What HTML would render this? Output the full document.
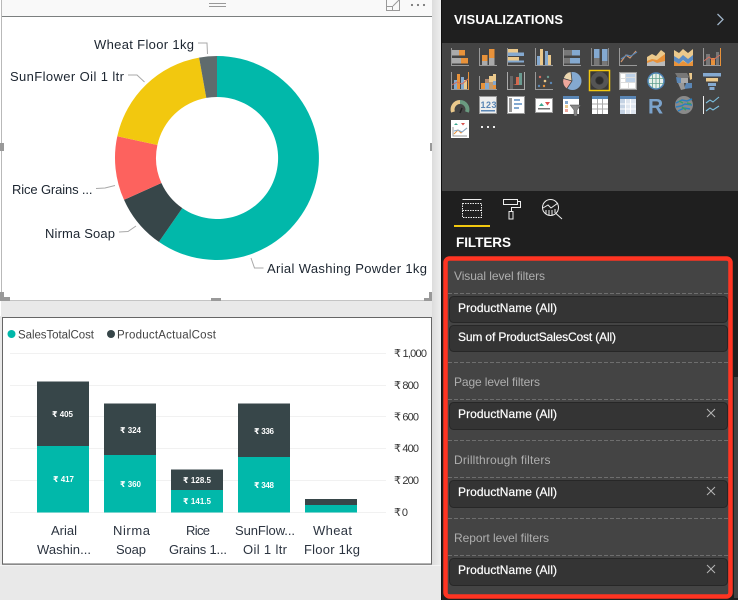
<!DOCTYPE html>
<html><head><meta charset="utf-8"><style>
html,body{margin:0;padding:0;background:#e9e9e9;width:738px;height:600px;overflow:hidden}
svg{display:block}
text{font-family:"Liberation Sans","DejaVu Sans",sans-serif}
.l{font-size:13px;fill:#1c2530}
.x{font-size:13px;fill:#2c3440}
.a{font-size:11px;fill:#333}
.d{font-size:8px;fill:#fff;font-weight:bold}
.h{font-size:12px;fill:#aeaeae}
.p{font-size:12px;fill:#fff;stroke:#fff;stroke-width:.2}
.g{stroke:#f1f1f1;stroke-width:1}
</style></head><body>
<svg width="738" height="600" viewBox="0 0 738 600" xmlns="http://www.w3.org/2000/svg">
<defs><linearGradient id="s" x1="0" x2="1" y1="0" y2="0"><stop offset="0" stop-color="#dcdcdc"/><stop offset="1" stop-color="#eeeeee"/></linearGradient></defs>
<rect width="738" height="600" fill="#e9e9e9"/>
<rect x="432" y="0" width="9" height="565" fill="url(#s)"/>
<rect x="0" y="565" width="441" height="1" fill="#f4f4f4"/>
<!-- top visual -->
<rect x="2" y="0" width="430" height="16" fill="#f9f9f9"/>
<rect x="2" y="16" width="430" height="284" fill="#fff"/>
<rect x="0" y="0" width="1" height="316" fill="#fff"/>
<rect x="2" y="16" width="430" height="1" fill="#7b7f7f"/>
<rect x="1" y="0" width="1" height="300" fill="#b9b9b9"/>
<rect x="2" y="300" width="430" height="1" fill="#c4c4c4"/>
<rect x="0" y="143" width="4" height="8" fill="#999"/>
<path d="M0 292h4v5h6v4H0z" fill="#999"/>
<rect x="211" y="298" width="10" height="3" fill="#999"/>
<rect x="430" y="143" width="2" height="8" fill="#999"/>
<path d="M432 292v9h-8v-3h5v-6z" fill="#999"/>
<path d="M209 3.500h17M209 6.500h17" stroke="#999" stroke-width="1" fill="none"/>
<path d="M386.500 0v10.500h13V0M386.500 6.500h6v4M393 6l6-6" stroke="#999" stroke-width="1" fill="none"/>
<circle cx="412" cy="5" r="1.100" fill="#777"/><circle cx="418" cy="5" r="1.100" fill="#777"/><circle cx="424" cy="5" r="1.100" fill="#777"/>
<!-- donut -->
<path d="M217 56A102 102 0 1 1 158.900 241.900L182.300 208.100A61 61 0 1 0 217 97Z" fill="#01B8AA"/>
<path d="M158.900 241.900A102 102 0 0 1 124 199.800L161.400 183A61 61 0 0 0 182.300 208.100Z" fill="#374649"/>
<path d="M124 199.800A102 102 0 0 1 117.300 136.300L157.400 145A61 61 0 0 0 161.400 183Z" fill="#FD625E"/>
<path d="M117.300 136.300A102 102 0 0 1 199.100 57.600L206.300 97.900A61 61 0 0 0 157.400 145Z" fill="#F2C80F"/>
<path d="M199.100 57.600A102 102 0 0 1 217 56V97A61 61 0 0 0 206.300 97.900Z" fill="#5F6B6D"/>
<g fill="none" stroke="#a8a8a8" stroke-width="1">
<path d="M198 43h9l.5 11"/><path d="M128 75h9l7.500 7"/><path d="M96 188.500l9-.5 10-2.500"/><path d="M119 232l9-.5 8-5.500"/><path d="M251 258l3.500 10h9"/>
</g>
<text class="l" x="94" y="49" textLength="100">Wheat Floor 1kg</text>
<text class="l" x="10" y="81" textLength="114">SunFlower Oil 1 ltr</text>
<text class="l" x="12" y="194" textLength="80.500">Rice Grains ...</text>
<text class="l" x="45" y="238" textLength="70">Nirma Soap</text>
<text class="l" x="267" y="273" textLength="160">Arial Washing Powder 1kg</text>
<!-- bottom visual -->
<rect x="2.500" y="317.500" width="429" height="246.500" fill="#fff" stroke="#666" stroke-width="1"/>
<rect x="2" y="564" width="430" height="1" fill="#8a8a8a"/>
<circle cx="11.500" cy="334" r="4" fill="#01B8AA"/>
<text x="18" y="338.500" font-size="11.500" fill="#444" textLength="76">SalesTotalCost</text>
<circle cx="111" cy="334" r="4" fill="#374649"/>
<text x="117" y="338.500" font-size="11.500" fill="#444" textLength="99">ProductActualCost</text>
<path class="g" d="M10 353.500H386M10 385.500H386M10 416.500H386M10 448.500H386M10 480.500H386M10 512.500H386"/>
<text class="a" x="394" y="357" textLength="33">₹ 1,000</text>
<text class="a" x="394" y="389" textLength="25">₹ 800</text>
<text class="a" x="394" y="420.500" textLength="25">₹ 600</text>
<text class="a" x="394" y="452" textLength="25">₹ 400</text>
<text class="a" x="394" y="484" textLength="25">₹ 200</text>
<text class="a" x="394" y="516" textLength="14">₹ 0</text>
<rect x="37" y="381.500" width="52" height="64.500" fill="#374649"/><rect x="37" y="446" width="52" height="66.500" fill="#01B8AA"/>
<rect x="104" y="403.500" width="52" height="51.500" fill="#374649"/><rect x="104" y="455" width="52" height="57.500" fill="#01B8AA"/>
<rect x="171" y="469.500" width="52" height="20.500" fill="#374649"/><rect x="171" y="490" width="52" height="22.500" fill="#01B8AA"/>
<rect x="238" y="403.500" width="52" height="53.500" fill="#374649"/><rect x="238" y="457" width="52" height="55.500" fill="#01B8AA"/>
<rect x="305" y="499" width="52" height="6" fill="#374649"/><rect x="305" y="505" width="52" height="7.500" fill="#01B8AA"/>
<text class="d" x="52" y="417" textLength="21">₹ 405</text>
<text class="d" x="53" y="482" textLength="21">₹ 417</text>
<text class="d" x="120" y="433" textLength="21">₹ 324</text>
<text class="d" x="120" y="487" textLength="21">₹ 360</text>
<text class="d" x="183" y="483" textLength="28">₹ 128.5</text>
<text class="d" x="183" y="504" textLength="28">₹ 141.5</text>
<text class="d" x="254" y="434" textLength="20">₹ 336</text>
<text class="d" x="254" y="488" textLength="20">₹ 348</text>
<text class="x" x="51" y="535" textLength="26">Arial</text>
<text class="x" x="37" y="554" textLength="54">Washin...</text>
<text class="x" x="113" y="535" textLength="37">Nirma</text>
<text class="x" x="116" y="554" textLength="30">Soap</text>
<text class="x" x="186" y="535" textLength="24">Rice</text>
<text class="x" x="169" y="554" textLength="58">Grains 1...</text>
<text class="x" x="235" y="535" textLength="60">SunFlow...</text>
<text class="x" x="243" y="554" textLength="44">Oil 1 ltr</text>
<text class="x" x="313" y="535" textLength="39">Wheat</text>
<text class="x" x="304" y="554" textLength="56">Floor 1kg</text>
<!-- dark panel -->
<rect x="441" y="0" width="297" height="600" fill="#1f1f1f"/>
<rect x="441" y="0" width="1" height="600" fill="#111"/>
<rect x="442" y="43" width="296" height="148" fill="#444"/>
<text x="454" y="24" font-size="13" font-weight="bold" fill="#fff" textLength="109">VISUALIZATIONS</text>
<path d="M717.500 14l5.500 5.500-5.500 5.500" fill="none" stroke="#9fb4c8" stroke-width="1.300"/>
<!-- viz icons -->
<g fill="none">
<g transform="translate(451,48)"><path d="M.5 0V17.500H18" stroke="#999"/><rect x="1" y="2" width="7" height="5.500" fill="#aaa"/><rect x="8" y="2" width="6" height="5.500" fill="#e8923a"/><rect x="1" y="10" width="9" height="5.500" fill="#aaa"/><rect x="10" y="10" width="7" height="5.500" fill="#e8923a"/></g>
<g transform="translate(479,48)"><path d="M.5 0V17.500H18" stroke="#999"/><rect x="3" y="7" width="5.500" height="6" fill="#e8923a"/><rect x="3" y="13" width="5.500" height="4" fill="#aaa"/><rect x="10" y="1" width="5.500" height="9" fill="#e8923a"/><rect x="10" y="10" width="5.500" height="7" fill="#aaa"/></g>
<g transform="translate(507,48)"><path d="M.5 0V17.500H18" stroke="#999"/><rect x="1" y="1" width="10" height="3.500" fill="#ebc98c"/><rect x="1" y="4.500" width="16" height="3.500" fill="#84a9d0"/><rect x="1" y="9" width="11" height="3.500" fill="#ebc98c"/><rect x="1" y="12.500" width="16" height="2" fill="#84a9d0"/></g>
<g transform="translate(535,48)"><path d="M.5 0V17.500H18" stroke="#999"/><rect x="2" y="8" width="3" height="9" fill="#84a9d0"/><rect x="5" y="1" width="3" height="16" fill="#ebc98c"/><rect x="10" y="3" width="3" height="14" fill="#84a9d0"/><rect x="13" y="7" width="3" height="10" fill="#ebc98c"/></g>
<g transform="translate(563,48)"><path d="M.5 0V17.500H18" stroke="#999"/><rect x="1" y="2" width="8" height="5.500" fill="#777"/><rect x="9" y="2" width="8" height="5.500" fill="#84a9d0"/><rect x="1" y="10" width="6" height="5.500" fill="#777"/><rect x="7" y="10" width="10" height="5.500" fill="#84a9d0"/></g>
<g transform="translate(591,48)"><path d="M.5 0V17.500H18M17.500 0V18" stroke="#888"/><rect x="3" y="1" width="5.500" height="9" fill="#84a9d0"/><rect x="3" y="10" width="5.500" height="7" fill="#777"/><rect x="11" y="1" width="5.500" height="12" fill="#84a9d0"/><rect x="11" y="13" width="5.500" height="4" fill="#777"/></g>
<g transform="translate(619,48)"><path d="M.5 0V17.500H18" stroke="#999"/><path d="M2 14L7 7l4 3 6-7" stroke="#d89a70" stroke-width="1.100"/><path d="M2 11l6-4 4 1 6-4" stroke="#5a86b5" stroke-width="1.100"/></g>
<g transform="translate(647,48)"><path d="M0 18V9l5-3 4 2 5-6 4 3v13z" fill="#ebc98c"/><path d="M0 18v-5l5-2 5 1 8-6v12z" fill="#e8923a"/><path d="M0 18v-3l6-2 4 2 8-2v5z" fill="#bbb"/></g>
<g transform="translate(674,47)"><path d="M0 3l5 3 4-4 5 4 5-4v16H0z" fill="#ebc98c"/><path d="M0 9l5 3 4-4 5 4 5-4v5l-5 4-5-4-4 4-5-3z" fill="#5a8cc5"/><path d="M0 14l5 3 4-3 5 3 5-3v5H0z" fill="#e8923a"/></g>
<g transform="translate(703,48)"><path d="M.5 0V17.500H18" stroke="#999"/><path d="M17.500 0V18" stroke="#e8923a"/><rect x="3" y="6" width="4" height="11" fill="#777"/><rect x="8" y="10" width="4" height="7" fill="#e8923a"/><rect x="13" y="4" width="3" height="13" fill="#777"/><path d="M1 13l5-4 4 3 7-5" stroke="#d46f5f"/></g>

<g transform="translate(451,72)"><path d="M.5 0V17.500H18" stroke="#999"/><path d="M17.500 0V18" stroke="#e8923a"/><rect x="3" y="8" width="3" height="9" fill="#84a9d0"/><rect x="6" y="2" width="3" height="15" fill="#e8923a"/><rect x="10" y="5" width="3" height="12" fill="#84a9d0"/><rect x="13" y="8" width="3" height="9" fill="#ebc98c"/><path d="M1 13l5-3 5 2 6-5" stroke="#d46f5f"/></g>
<g transform="translate(479,72)"><path d="M.5 4V17.500H18" stroke="#999"/><rect x="2" y="11" width="4" height="6" fill="#e8923a"/><rect x="6" y="7" width="4" height="4" fill="#b08a70"/><rect x="6" y="11" width="4" height="6" fill="#84a9d0"/><rect x="10" y="4" width="4" height="6" fill="#ebc98c"/><rect x="10" y="10" width="4" height="7" fill="#c09a70"/><rect x="14" y="2" width="3" height="7" fill="#ebc98c"/><rect x="14" y="9" width="3" height="4" fill="#84a9d0"/><rect x="14" y="13" width="3" height="4" fill="#e8923a"/></g>
<g transform="translate(507,72)"><path d="M.5 0V17.500H18M17.500 0V18" stroke="#aaa"/><rect x="3" y="4" width="3" height="13" fill="#666"/><path d="M6 12h3V5h3v8h-3" fill="#d56a50"/><rect x="12" y="1" width="3" height="12" fill="#6a9a90"/></g>
<g transform="translate(535,72)"><path d="M.5 0V17.500H18" stroke="#999"/><circle cx="4" cy="14" r="1.200" fill="#5a86b5"/><circle cx="5" cy="5" r="1.200" fill="#d46f5f"/><circle cx="10" cy="9" r="1.300" fill="#ebc98c"/><circle cx="13" cy="5" r="1.200" fill="#6a9a90"/><circle cx="16" cy="11" r="1.200" fill="#5a86b5"/><circle cx="9" cy="14" r="1.200" fill="#e8923a"/></g>
<g transform="translate(563,72)"><circle cx="9.500" cy="9" r="9" fill="#84a9d0"/><path d="M9 9L8 0A9 9 0 0 0 .8 6z" fill="#ebd5ae"/><path d="M9 9L.5 6.500A9 9 0 0 0 4 16.500z" fill="#eda79c"/><path d="M9 9L8 0M9 9L.5 6.500M9 9L4 16.500" stroke="#444" stroke-width=".8"/></g>
<rect x="589.500" y="70.500" width="20" height="20" fill="#383838" stroke="#f2c80f" stroke-width="1.500"/>
<circle cx="599.500" cy="80.500" r="6.500" fill="none" stroke="#555" stroke-width="4.500"/>
<circle cx="599.500" cy="80.500" r="3.500" fill="#2c2c2c"/>
<g transform="translate(619,72)"><rect x=".5" y=".5" width="17" height="17" fill="#ddd" stroke="#999"/><rect x="2" y="2" width="4" height="4" fill="#fff"/><rect x="2" y="7" width="4" height="3" fill="#fff"/><rect x="7" y="2" width="9" height="3" fill="#bcd0e6"/><rect x="7" y="6" width="9" height="4" fill="#bcd0e6"/><rect x="2" y="11" width="7" height="5" fill="#fff"/><rect x="10" y="11" width="6" height="5" fill="#fff"/></g>
<g transform="translate(647,72)"><circle cx="9" cy="9" r="8" fill="#e8f1ea" stroke="#4f86ba" stroke-width="1.500"/><path d="M1 6.500H17M1 11.500H17M5.500 2V16M12.500 2V16M9 1V17" stroke="#5e9f8e" stroke-width=".8"/></g>
<g transform="translate(675,72)"><path d="M0 1h12l2 4-4 3H4z" fill="#777"/><path d="M1 5l5 1v5H2z" fill="#5a86b5"/><path d="M6 6h7v5H6z" fill="#aaa"/><path d="M11 11h6v5l-8 1z" fill="#5a86b5"/><path d="M3 11h6l1 6-4 1z" fill="#999"/><path d="M14 1h3v6l-2 1z" fill="#ebc98c"/></g>
<g transform="translate(703,72)"><rect x="0" y="1" width="18" height="3.500" fill="#84a9d0"/><rect x="3" y="6" width="12" height="3.500" fill="#ebc98c"/><rect x="5" y="11" width="8" height="3" fill="#84a9d0"/><rect x="6.500" y="15" width="5" height="3" fill="#84a9d0"/></g>

<g transform="translate(451,96)"><path d="M2 16A7.500 7.500 0 0 1 9 6" stroke="#ebc98c" stroke-width="4"/><path d="M9 6A7.500 7.500 0 0 1 16 16" stroke="#6a9a80" stroke-width="4"/><path d="M9 17l2-5" stroke="#222" stroke-width="1.500"/></g>
<g transform="translate(479,96)"><rect x=".5" y=".5" width="17" height="17" fill="#eee" stroke="#999"/><rect x="2" y="14" width="14" height="1.500" fill="#5a86b5"/></g>
<text x="480.500" y="108" font-size="9" font-weight="bold" fill="#5a86b5" textLength="16">123</text>
<g transform="translate(507,96)"><rect x=".5" y=".5" width="17" height="17" fill="#fff" stroke="#999"/><rect x="2" y="2" width="3" height="14" fill="#999"/><rect x="7" y="3" width="6" height="2" fill="#84a9d0"/><rect x="7" y="7" width="8" height="2" fill="#84a9d0"/><rect x="7" y="11" width="5" height="2" fill="#84a9d0"/></g>
<g transform="translate(535,98)"><rect x=".5" y=".5" width="17" height="14" fill="#fff" stroke="#999"/><path d="M4 8l2.500-3L9 8z" fill="#3aa88f"/><path d="M10 4h5l-2.500 3.500z" fill="#d9534f"/><rect x="3" y="10" width="12" height="1.500" fill="#777"/></g>
<g transform="translate(563,96)"><rect width="16" height="18" fill="#fff"/><rect width="16" height="3" fill="#5a86b5"/><rect x="2" y="5" width="3" height="3" fill="#84a9d0"/><rect x="2" y="9" width="3" height="3" fill="#ebc98c"/><rect x="2" y="13" width="3" height="3" fill="#eda79c"/><path d="M7 9h11l-4 5v6h-3v-6z" fill="#888" stroke="#444" stroke-width=".5"/></g>
<g transform="translate(592,96)"><rect width="16" height="18" fill="#fff"/><rect width="16" height="3" fill="#5a86b5"/><path d="M0 8h16M0 13h16M5.500 3v15M10.500 3v15" stroke="#aaa"/></g>
<g transform="translate(620,96)"><rect width="16" height="18" fill="#dfe6ef"/><rect width="16" height="3" fill="#5a86b5"/><rect y="3" width="5" height="15" fill="#c5d3e4"/><path d="M0 8h16M0 13h16M5.500 3v15M10.500 3v15" stroke="#fff"/></g>
<g transform="translate(675,96)"><circle cx="9" cy="9" r="9" fill="#8a8a8a"/><path d="M1 7l6-3 5 1 5-2M1 11l5-1 4-2 7 1M3 15l6-3 6 1" stroke="#2a7fc0" stroke-width="1.500"/><path d="M4 5l4 2M7 11l4 3M12 7l4 1" stroke="#3aa060" stroke-width="1.500"/></g>
<g transform="translate(703,96)"><path d="M.5 0v18" stroke="#eee"/><path d="M3 7l4-3 3 2 6-5" stroke="#7cc0e0" stroke-width="1.100"/><path d="M3 15l4-3 3 2 6-4" stroke="#7cc0e0" stroke-width="1.100"/></g>
<g transform="translate(451,120)"><rect width="18" height="18" fill="#fff"/><path d="M3 5l2-2 2 2z" fill="#3aa88f"/><path d="M10 3h4l-2 2.500z" fill="#d9534f"/><path d="M2 7v9h14" stroke="#999"/><path d="M3 14l4-4 3 3 6-5" stroke="#e8923a"/><path d="M3 11l4-1 4 2 5-4" stroke="#84a9d0"/></g>
</g>
<text x="648" y="113.500" font-size="21" font-weight="bold" fill="#7ba3cc" textLength="16">R</text>
<rect x="481" y="126" width="2" height="2" fill="#eee"/><rect x="487" y="126" width="2" height="2" fill="#eee"/><rect x="493" y="126" width="2" height="2" fill="#eee"/>
<!-- pane tabs -->
<rect x="442" y="191" width="296" height="70" fill="#1f1f1f"/>
<g fill="none" stroke="#eee" stroke-width="1">
<path d="M462.500 199.500h19" />
<path d="M462.500 203.500h19v14h-19zM462.500 210.500h19" stroke-dasharray="1.500 1"/>
<path d="M503.500 199.500h14v5h-14zM517.500 201.500h3v6h-9v4M509 211.500h4v7.500h-4z"/>
<circle cx="550.500" cy="207.500" r="8"/><path d="M556 213.500l6 5.500"/>
<path d="M543 208l5-3 3 3 7-5M546 210v4M549 210v5M552 210v5M555 209v4"/>
</g>
<rect x="454" y="225" width="36" height="2" fill="#f2c80f"/>
<text x="456" y="247" font-size="13.500" font-weight="bold" fill="#fff" textLength="55">FILTERS</text>
<!-- filters -->
<rect x="734" y="377" width="4" height="221" fill="#444"/>
<rect x="445.500" y="258.500" width="285" height="338" rx="4" fill="#444" stroke="#ff3422" stroke-width="4.500"/>
<path d="M448 293.500H728M448 362.500H728M448 399.500H728M448 440.500H728M448 477.500H728M448 518.500H728M448 555.500H728" stroke="#6e6e6e" stroke-dasharray="4 2" fill="none"/>
<text class="h" x="454" y="280" textLength="91">Visual level filters</text>
<text class="h" x="454" y="386" textLength="86">Page level filters</text>
<text class="h" x="454" y="464" textLength="96.500">Drillthrough filters</text>
<text class="h" x="454" y="542" textLength="95">Report level filters</text>
<g fill="#343434" stroke="#272727">
<rect x="449.500" y="296.500" width="278" height="26" rx="4"/>
<rect x="449.500" y="325.500" width="278" height="26" rx="4"/>
<rect x="449.500" y="402.500" width="278" height="27" rx="4"/>
<rect x="449.500" y="480.500" width="278" height="27" rx="4"/>
<rect x="449.500" y="558.500" width="278" height="27" rx="4"/>
</g>
<text class="p" x="458" y="312" textLength="99">ProductName (All)</text>
<text class="p" x="458" y="341" textLength="158">Sum of ProductSalesCost (All)</text>
<text class="p" x="458" y="418" textLength="99">ProductName (All)</text>
<text class="p" x="458" y="496" textLength="99">ProductName (All)</text>
<text class="p" x="458" y="574" textLength="99">ProductName (All)</text>
<path d="M707 409l8 8M715 409l-8 8M707 487l8 8M715 487l-8 8M707 565l8 8M715 565l-8 8" stroke="#b5b5b5" stroke-width="1" fill="none"/>
</svg>
</body></html>
